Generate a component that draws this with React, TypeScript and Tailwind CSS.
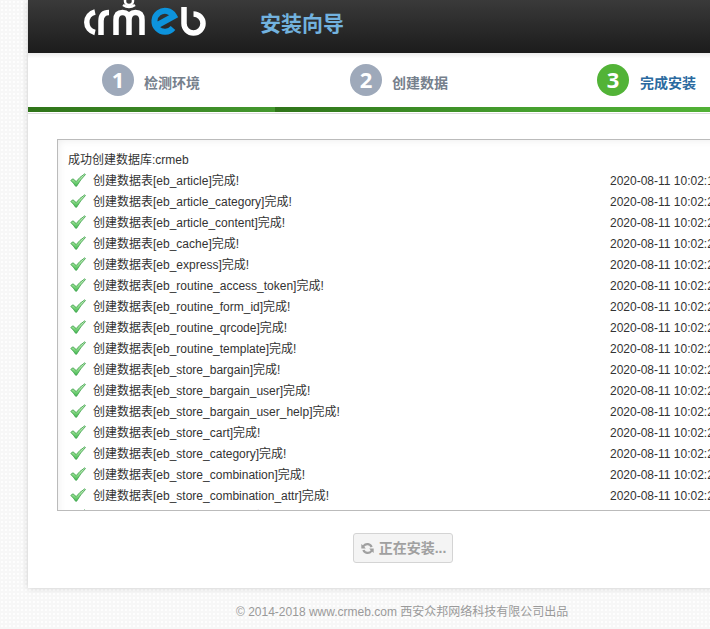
const tables = ["eb_article","eb_article_category","eb_article_content","eb_cache","eb_express","eb_routine_access_token","eb_routine_form_id","eb_routine_qrcode","eb_routine_template","eb_store_bargain","eb_store_bargain_user","eb_store_bargain_user_help","eb_store_cart","eb_store_category","eb_store_combination","eb_store_combination_attr","eb_store_coupon"];
const font = "font-['Liberation_Sans','Noto_Sans_CJK_SC',sans-serif]";

function Check() {
  return (
    <svg width="16" height="14" viewBox="0 0 16 14" className="shrink-0">
      <defs>
        <linearGradient id="chk" x1="0" y1="0" x2="0" y2="1">
          <stop offset="0" stopColor="#d2f3cb" />
          <stop offset="0.55" stopColor="#8edc8a" />
          <stop offset="1" stopColor="#3fb84f" />
        </linearGradient>
      </defs>
      <path d="M0.8 7.4 L3 5.8 L6.2 8.6 Q9.5 4 14.8 0.8 L15.4 1.6 Q10.5 6.4 6.6 13.2 L5.6 13.2 Q3.6 10 0.8 7.4 Z" fill="url(#chk)" stroke="#46a552" strokeWidth="0.9" strokeLinejoin="round" />
    </svg>
  );
}

function Logo() {
  return (
    <svg width="126" height="37" viewBox="0 0 126 37" className="block">
      <g fill="none" stroke="#fff" strokeWidth="5.5">
        <path d="M13 12 A10.5 10.5 0 0 0 13 32.5" />
        <path d="M19 35 V21 Q19 12.5 27 12.5" />
        <path d="M34 35 V20 Q34 12.5 40.5 12.5 Q47 12.5 47 20 V35 M47 20 Q47 12.5 53.5 12.5 Q60 12.5 60 20 V35" />
        <path d="M41 5 Q47 9 53 5" strokeWidth="2.5" />
        <circle cx="47" cy="1" r="4" strokeWidth="2.5" />
        <path d="M102 7 V23.5 A9.5 9.5 0 1 0 111.5 14" />
      </g>
      <path d="M72 27 L92 16 A10.5 10.5 0 1 0 91 28" fill="none" stroke="#0d93dc" strokeWidth="6" />
    </svg>
  );
}

function Step({ n, label, active }: { n: number; label: string; active?: boolean }) {
  return (
    <div className={`w-[248px] flex items-center ${active ? "pl-[73px]" : "pl-[74px]"}`}>
      <div className={`w-8 h-8 rounded-full flex items-center justify-center text-white font-bold text-[22px] font-['Open_Sans',sans-serif] ${active ? "bg-[#52b337]" : "bg-[#9ea9ba]"}`}>{n}</div>
      <span className={`mt-[7px] text-[14px] font-bold ${active ? "ml-[11px] text-[#2b6aa0]" : "ml-[10px] text-[#76808c]"}`}>{label}</span>
    </div>
  );
}

export default function App() {
  return (
    <div className={`w-[710px] h-[629px] overflow-hidden relative bg-[#f7f7f7] bg-[radial-gradient(#ffffff_0.7px,transparent_0.8px)] bg-[length:4px_4px] ${font}`}>
      <div className="ml-[28px] w-[760px] bg-white shadow-[0_0_6px_rgba(0,0,0,0.18)] h-[588px]">
        <header className="h-[53px] flex bg-gradient-to-b from-[#3a3a3a] to-[#1c1c1c] overflow-hidden">
          <div className="ml-[54px]"><Logo /></div>
          <span className="ml-[52px] mt-[8px] text-[21px] leading-[32px] font-bold text-[#72b2df]">安装向导</span>
        </header>
        <div className="h-[54px] flex items-center pb-[1px] bg-gradient-to-b from-[#ececec] via-white via-[10%] to-white">
          <Step n={1} label="检测环境" />
          <Step n={2} label="创建数据" />
          <Step n={3} label="完成安装" active />
        </div>
        <div className="flex h-[5px]">
          <div className="w-[247px] bg-gradient-to-r from-[#2f7419] to-[#44982e]" />
          <div className="flex-1 bg-gradient-to-r from-[#2f7419] via-[#46a02f] via-[50%] to-[#56b838]" />
        </div>
        <div className="mt-[1px] h-[1px] bg-[#dddddd]" />
        <div className="pt-[25px] pl-[29px]">
          <div className="w-[740px] h-[372px] border border-[#bbbbbb] overflow-hidden shadow-[inset_6px_6px_8px_-6px_rgba(0,0,0,0.08)] pl-[10px] pt-[10px] text-[12px] text-[#333333]">
            <div className="h-[20px] leading-[20px]">成功创建数据库:crmeb</div>
            {tables.map((t, i) => (
              <div key={t} className="h-[21px] flex items-center">
                <div className="ml-[3px] w-[22px] -translate-x-[1px] -translate-y-[1px]"><Check /></div>
                <span className="w-[517px]">创建数据表[{t}]完成!</span>
                <span className="whitespace-nowrap">2020-08-11 10:02:{i === 0 ? "19" : "20"}</span>
              </div>
            ))}
          </div>
          <div className="ml-[296px] mt-[22px] w-[100px] h-[30px] rounded-[3px] border border-[#d4d4d4] bg-[#f4f4f4] flex items-center justify-center gap-[4px] text-[14px] font-bold text-[#a0a0a0]">
            <svg width="15" height="15" viewBox="0 0 16 16" fill="#a0a0a0">
              <path d="M13.5 6.2 A6 6 0 0 0 3 4.6 L1.4 3.2 V8 H6.2 L4.6 6.2 A3.8 3.8 0 0 1 11.2 6.8 Z" />
              <path d="M2.5 9.8 A6 6 0 0 0 13 11.4 L14.6 12.8 V8 H9.8 L11.4 9.8 A3.8 3.8 0 0 1 4.8 9.2 Z" />
            </svg>
            <span>正在安装...</span>
          </div>
        </div>
      </div>
      <div className="absolute left-0 right-0 top-[604px] pl-[236px] text-[12px] leading-[16px] text-[#9a9a9a] whitespace-nowrap">© 2014-2018 www.crmeb.com 西安众邦网络科技有限公司出品</div>
    </div>
  );
}
